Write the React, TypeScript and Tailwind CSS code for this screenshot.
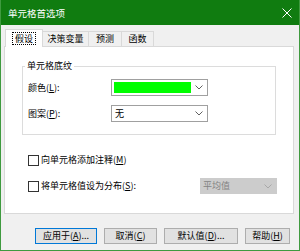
import React from "react";

const font = { fontFamily: '"Noto Sans CJK SC", "Noto Sans", sans-serif' };

function Chevron({ color = "#606060" }: { color?: string }) {
  return (
    <svg width="8" height="5" viewBox="0 0 8 5" className="shrink-0">
      <path d="M0.5 0.5 L4 4 L7.5 0.5" fill="none" stroke={color} strokeWidth="1" />
    </svg>
  );
}

function Acc({ k }: { k: string }) {
  return (
    <span>
      (<span className="underline">{k}</span>)
    </span>
  );
}

export default function App() {
  return (
    <div
      className="w-[300px] h-[251px] bg-[#f0f0f0] border-x border-b border-[#3f9a3f] flex flex-col text-[9px] leading-[12px] text-black overflow-hidden"
      style={font}
    >
      {/* title bar */}
      <div className="h-[25px] bg-[#107c10] -mx-px flex items-center justify-between pl-[8px] pr-[8px] shrink-0">
        <span className="text-white text-[9.5px]">单元格首选项</span>
        <svg width="10" height="10" viewBox="0 0 10 10">
          <path d="M0.5 0.5 L9.5 9.5 M9.5 0.5 L0.5 9.5" stroke="#ffffff" strokeWidth="1" />
        </svg>
      </div>

      {/* tabs */}
      <div className="flex items-end pl-[4px] mt-[3px] h-[18px] shrink-0">
        <div className="relative z-10 w-[38px] h-[18px] bg-white border border-b-0 border-[#d9d9d9] flex items-center justify-center -mb-px pb-px">
          <span className="border border-dotted border-black px-[2px] leading-[11px]">假设</span>
        </div>
        <div className="w-[46px] h-[15px] border border-l-0 border-b-0 border-[#d9d9d9] flex items-center justify-center">决策变量</div>
        <div className="w-[33px] h-[15px] border border-l-0 border-b-0 border-[#d9d9d9] flex items-center justify-center">预测</div>
        <div className="w-[32px] h-[15px] border border-l-0 border-b-0 border-[#d9d9d9] flex items-center justify-center">函数</div>
      </div>

      {/* panel */}
      <div className="ml-[3px] mr-[5px] h-[168px] bg-white border border-[#d9d9d9] relative shrink-0 pt-[19px] pl-[17px]">
        {/* group box */}
        <div className="relative w-[254px] h-[69px] border border-[#dcdcdc]">
          <span className="absolute -top-[7px] left-[2px] bg-white px-[2px]">单元格底纹</span>
          <div className="flex items-center mt-[12px] pl-[5px]">
            <span className="w-[83px]">颜色<Acc k="L" />:</span>
            <div className="w-[97px] h-[17px] border border-[#a0a0a0] bg-white flex items-center pl-[2px] pr-[4px]">
              <div className="w-[77px] h-[11px] bg-[#00ff00]" />
              <div className="flex-1" />
              <Chevron />
            </div>
          </div>
          <div className="flex items-center mt-[9px] pl-[5px]">
            <span className="w-[83px]">图案<Acc k="P" />:</span>
            <div className="w-[97px] h-[17px] border border-[#a0a0a0] bg-white flex items-center pl-[3px] pr-[4px]">
              <span className="flex-1">无</span>
              <Chevron />
            </div>
          </div>
        </div>

        {/* checkboxes */}
        <div className="flex items-center mt-[19px] pl-[6px]">
          <div className="w-[11px] h-[11px] border border-[#333333] bg-white mr-[2px]" />
          <span>向单元格添加注释<Acc k="M" /></span>
        </div>
        <div className="flex items-center mt-[12px] pl-[6px]">
          <div className="w-[11px] h-[11px] border border-[#333333] bg-white mr-[2px]" />
          <span className="w-[159px]">将单元格值设为分布<Acc k="S" />:</span>
          <div className="w-[77px] h-[16px] bg-[#cccccc] flex items-center pl-[3px] pr-[5px] text-[#838383]">
            <span className="flex-1">平均值</span>
            <Chevron color="#a8a8a8" />
          </div>
        </div>
      </div>

      {/* buttons */}
      <div className="flex items-center mt-[14px] pl-[34px] gap-[7px] shrink-0">
        <div className="w-[62px] h-[16px] border border-[#0078d7] bg-[#e1e1e1] flex items-center justify-center">应用于<Acc k="A" />...</div>
        <div className="w-[53px] h-[16px] border border-[#adadad] bg-[#e1e1e1] flex items-center justify-center">取消<Acc k="C" /></div>
        <div className="w-[74px] h-[16px] border border-[#adadad] bg-[#e1e1e1] flex items-center justify-center">默认值<Acc k="D" />...</div>
        <div className="w-[45px] h-[16px] border border-[#adadad] bg-[#e1e1e1] flex items-center justify-center">帮助<Acc k="H" /></div>
      </div>
    </div>
  );
}
